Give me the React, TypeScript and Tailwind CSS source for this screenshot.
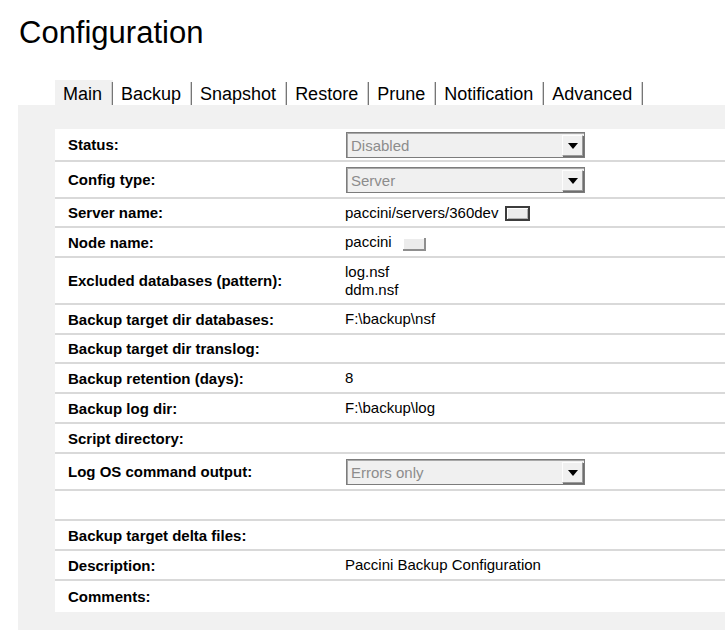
import type { ReactNode } from "react";

const tabs = ["Main", "Backup", "Snapshot", "Restore", "Prune", "Notification", "Advanced"];

const FakeSelect = ({ value }: { value: string }) => (
  <div className="ml-[1px] flex h-[26px] w-[239px] items-center justify-between border border-[#7c7c7c] bg-[#f0f0f0] shadow-[inset_1px_1px_0_#a8a8a8]">
    <span className="pl-[4px] text-[15px] leading-none text-[#8c8c8c]">{value}</span>
    <span className="mr-[1px] flex h-[21px] w-[21px] items-center justify-center border-t border-l border-t-[#fdfdfd] border-l-[#fdfdfd] border-r border-b border-r-[#9a9a9a] border-b-[#9a9a9a] bg-[#f0f0f0] shadow-[1px_1px_0_#6e6e6e]">
      <svg width="10" height="6" viewBox="0 0 10 6" className="mt-[2px]">
        <path d="M0 0H10L5 6Z" fill="#000" />
      </svg>
    </span>
  </div>
);

const Row = ({
  label,
  h,
  last,
  children,
}: {
  label: string;
  h: string;
  last?: boolean;
  children?: ReactNode;
}) => (
  <div className={`flex items-center ${h} ${last ? "" : "border-b-2 border-[#d9d9d9]"}`}>
    <div className="w-[290px] shrink-0 pl-[13px] pt-[2px] text-[15px] font-bold">{label}</div>
    <div className="flex flex-1 items-center pt-[1px] text-[15px]">{children}</div>
  </div>
);

export default function App() {
  return (
    <div className="min-h-[630px] bg-white font-['Liberation_Sans',Arial,sans-serif] text-black">
      <h1 className="pl-[19px] pt-[15px] text-[31px] leading-[36px]">Configuration</h1>

      <div className="ml-[55px] mt-[29px] flex h-[25px] text-[18px] leading-[25px]">
        {tabs.map((t, i) => (
          <div key={t} className={`flex items-stretch ${i === 0 ? "bg-[#f1f1f1]" : ""}`}>
            <span className="pl-[8px] pr-[9px] pt-[2px]">{t}</span>
            <span className="mt-[2px] flex">
              <span className="w-[1px] bg-[#d0d0d0]" />
              <span className="w-[1px] bg-[#767676]" />
            </span>
          </div>
        ))}
      </div>

      <div className="ml-[18px] bg-[#f1f1f1] pb-[30px] pl-[37px] pt-[24px]">
        <div className="bg-white">
          <Row label="Status:" h="h-[33px]">
            <FakeSelect value="Disabled" />
          </Row>
          <Row label="Config type:" h="h-[37px]">
            <FakeSelect value="Server" />
          </Row>
          <Row label="Server name:" h="h-[29px]">
            <span>paccini/servers/360dev</span>
            <span className="ml-[7px] h-[15px] w-[25px] border-2 border-[#3c3c3c] bg-[#ececec] shadow-[inset_1px_1px_0_#ffffff,inset_-1px_-1px_0_#b0b0b0]" />
          </Row>
          <Row label="Node name:" h="h-[30px]">
            <span>paccini</span>
            <span className="ml-[11px] mt-[3px] h-[13px] w-[23px] border-r-2 border-b-2 border-[#8e8e8e] bg-[#ececec] shadow-[inset_1px_1px_0_#ffffff]" />
          </Row>
          <Row label="Excluded databases (pattern):" h="h-[47px]">
            <div className="leading-[18px]">
              <div>log.nsf</div>
              <div>ddm.nsf</div>
            </div>
          </Row>
          <Row label="Backup target dir databases:" h="h-[30px]">
            {"F:\\backup\\nsf"}
          </Row>
          <Row label="Backup target dir translog:" h="h-[29px]" />
          <Row label="Backup retention (days):" h="h-[30px]">
            8
          </Row>
          <Row label="Backup log dir:" h="h-[30px]">
            {"F:\\backup\\log"}
          </Row>
          <Row label="Script directory:" h="h-[30px]" />
          <Row label="Log OS command output:" h="h-[37px]">
            <FakeSelect value="Errors only" />
          </Row>
          <div className="h-[30px] border-b-2 border-[#d9d9d9]" />
          <Row label="Backup target delta files:" h="h-[30px]" />
          <Row label="Description:" h="h-[30px]">
            Paccini Backup Configuration
          </Row>
          <Row label="Comments:" h="h-[31px]" last />
        </div>
      </div>
    </div>
  );
}
